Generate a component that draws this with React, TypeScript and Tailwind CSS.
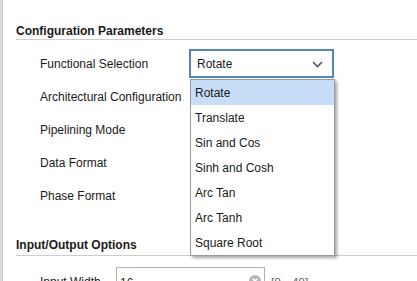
import React from "react";

const items = ["Rotate", "Translate", "Sin and Cos", "Sinh and Cosh", "Arc Tan", "Arc Tanh", "Square Root"];

function Label({ children }: { children: React.ReactNode }) {
  return <div className="pl-[24px] text-[12px] leading-[14px] text-[#1a1a1a]">{children}</div>;
}

export default function App() {
  return (
    <div
      className="relative w-[417px] h-[281px] overflow-hidden bg-white flex"
      style={{ fontFamily: '"Liberation Sans", Arial, sans-serif' }}
    >
      <div className="w-[3px] h-full bg-[#dcdcdc] border-r border-[#cfcfcf]" />
      <div className="flex-1 pl-[13px] pt-[24px]">
        <div className="border-b border-[#cccccc] pb-[1px]">
          <div className="text-[12px] leading-[14px] font-bold text-[#1a1a1a]">Configuration Parameters</div>
        </div>
        <div className="mt-[7px] flex flex-col">
          <div className="h-[33px] flex items-center">
            <div className="w-[173px]">
              <Label>Functional Selection</Label>
            </div>
            <div className="w-[145px] h-[29px] border-2 border-[#5584c4] flex items-center justify-between pl-[6px] pr-[9px] text-[12px] text-[#1a1a1a]">
              <span>Rotate</span>
              <svg width="11" height="7" viewBox="0 0 11 7" className="mt-[1px]">
                <path d="M1 1 L5.5 5.5 L10 1" fill="none" stroke="#555" strokeWidth="1.6" />
              </svg>
            </div>
          </div>
          <div className="h-[33px] flex items-center">
            <Label>Architectural Configuration</Label>
          </div>
          <div className="h-[33px] flex items-center">
            <Label>Pipelining Mode</Label>
          </div>
          <div className="h-[33px] flex items-center">
            <Label>Data Format</Label>
          </div>
          <div className="h-[33px] flex items-center">
            <Label>Phase Format</Label>
          </div>
        </div>
        <div className="mt-[26px] border-b border-[#cccccc] pb-[3px]">
          <div className="text-[12px] leading-[14px] font-bold text-[#1a1a1a]">Input/Output Options</div>
        </div>
        <div className="mt-[11px] flex items-start">
          <div className="w-[100px] pt-[8px]">
            <Label>Input Width</Label>
          </div>
          <div className="w-[149px] h-[26px] border border-[#b0b0b0] flex items-start justify-between pl-[3px] pr-[3px] pt-[6px] text-[12px] text-[#1a1a1a]">
            <span>16</span>
            <svg width="12" height="12" viewBox="0 0 12 12" className="mt-[1px]">
              <circle cx="6" cy="6" r="6" fill="#b5b5b5" />
              <path d="M3.8 3.8 L8.2 8.2 M8.2 3.8 L3.8 8.2" stroke="#fff" strokeWidth="1.6" />
            </svg>
          </div>
          <div className="ml-[6px] pt-[7px] text-[12px] text-[#666]">[8 - 48]</div>
        </div>
      </div>

      <div className="absolute left-[190px] top-[79px] w-[145px] bg-white border border-[#9a9a9a] shadow-[2px_2px_3px_rgba(0,0,0,0.35)]">
        {items.map((it, i) => (
          <div
            key={it}
            className={
              "h-[25px] flex items-center pl-[4px] text-[12px] text-[#1a1a1a] " +
              (i === 0 ? "bg-[#c7ddf8]" : "")
            }
          >
            {it}
          </div>
        ))}
      </div>
    </div>
  );
}
